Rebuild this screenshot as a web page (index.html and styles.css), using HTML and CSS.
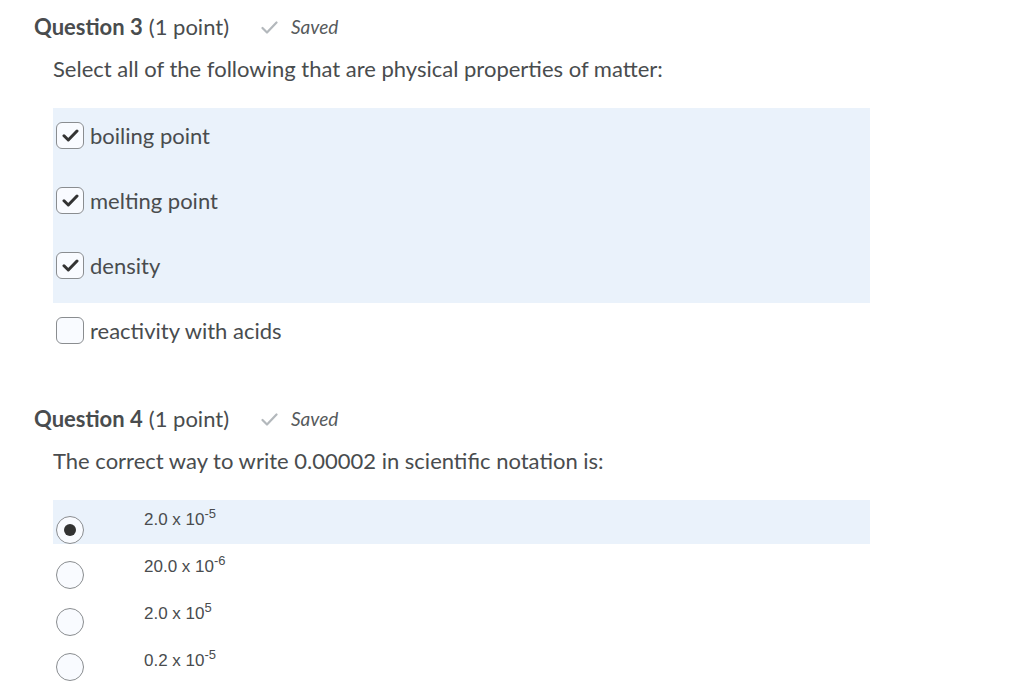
FILE: index.html
```html
<!DOCTYPE html>
<html lang="en">
<head>
  <meta charset="UTF-8">
  <title>Quiz</title>
  <link rel="stylesheet" href="styles.css">
</head>
<body>
  <div class="quiz">

    <!-- Question 3 -->
    <section class="question">
      <h2 class="q-head">
        <strong>Question 3</strong> (1 point)
        <span class="saved">
          <svg class="saved-icon" width="17" height="13" viewBox="0 0 17 13"><path d="M1.5 7 L6 11.5 L15.5 1.5" fill="none" stroke="#b3b8bc" stroke-width="2.2" stroke-linecap="round" stroke-linejoin="round"/></svg>
          Saved
        </span>
      </h2>
      <p class="q-text">Select all of the following that are physical properties of matter:</p>
      <ul class="checks">
        <li class="check-row on">
          <span class="box"><svg width="17" height="13" viewBox="0 0 17 13"><path d="M2 6.8 L6.3 11 L15 2" fill="none" stroke="#333" stroke-width="3" stroke-linecap="round" stroke-linejoin="round"/></svg></span>
          boiling point
        </li>
        <li class="check-row on">
          <span class="box"><svg width="17" height="13" viewBox="0 0 17 13"><path d="M2 6.8 L6.3 11 L15 2" fill="none" stroke="#333" stroke-width="3" stroke-linecap="round" stroke-linejoin="round"/></svg></span>
          melting point
        </li>
        <li class="check-row on">
          <span class="box"><svg width="17" height="13" viewBox="0 0 17 13"><path d="M2 6.8 L6.3 11 L15 2" fill="none" stroke="#333" stroke-width="3" stroke-linecap="round" stroke-linejoin="round"/></svg></span>
          density
        </li>
        <li class="check-row">
          <span class="box"></span>
          reactivity with acids
        </li>
      </ul>
    </section>

    <!-- Question 4 -->
    <section class="question q4">
      <h2 class="q-head">
        <strong>Question 4</strong> (1 point)
        <span class="saved">
          <svg class="saved-icon" width="17" height="13" viewBox="0 0 17 13"><path d="M1.5 7 L6 11.5 L15.5 1.5" fill="none" stroke="#b3b8bc" stroke-width="2.2" stroke-linecap="round" stroke-linejoin="round"/></svg>
          Saved
        </span>
      </h2>
      <p class="q-text">The correct way to write 0.00002 in scientific notation is:</p>
      <ul class="radios">
        <li class="radio-row on"><span class="circle"><span class="dot"></span></span><span class="val">2.0 x 10<sup>-5</sup></span></li>
        <li class="radio-row"><span class="circle"></span><span class="val">20.0 x 10<sup>-6</sup></span></li>
        <li class="radio-row"><span class="circle"></span><span class="val">2.0 x 10<sup>5</sup></span></li>
        <li class="radio-row last"><span class="circle"></span><span class="val">0.2 x 10<sup>-5</sup></span></li>
      </ul>
    </section>

  </div>
</body>
</html>
```

FILE: styles.css
```css
* { box-sizing: border-box; }
body { margin: 0; font-family: 'Lato', 'Liberation Sans', sans-serif; color: #494c4e; background: #fff; }

.quiz { padding: 15px 0 0 34px; }
.question.q4 { margin-top: 39px; }

/* heading line */
.q-head {
  margin: 0;
  font-size: 22px;
  font-weight: normal;
  line-height: 24px;
  display: flex;
  align-items: center;
}
.q-head strong { font-weight: bold; margin-right: 6px; }
.saved {
  display: flex;
  align-items: center;
  margin-left: 32px;
  font-style: italic;
  font-size: 19px;
  color: #565a5c;
}
.saved-icon { margin-right: 13px; margin-top: 1px; }

.q-text { margin: 18px 0 0 19px; font-size: 22px; line-height: 24px; }

/* checkboxes */
.checks { list-style: none; margin: 27px 0 0 19px; padding: 0; width: 817px; }
.check-row {
  display: flex;
  align-items: center;
  height: 65px;
  padding: 14px 0 25px 3px;
  font-size: 22px;
}
.check-row.on { background: #eaf2fb; }
.box {
  width: 28px;
  height: 27px;
  border: 1px solid #8a8d90;
  border-radius: 6px;
  background: #f9fbff;
  margin-right: 6px;
  display: flex;
  align-items: center;
  justify-content: center;
}

/* radios */
.radios { list-style: none; margin: 27px 0 0 19px; padding: 0; width: 817px; }
.radio-row {
  display: flex;
  align-items: flex-start;
  height: 47px;
  padding: 14px 0 0 3px;
  font-family: 'Liberation Sans', Arial, sans-serif;
  font-size: 17px;
}
.radio-row.on { background: #eaf2fb; height: 44px; margin-bottom: 3px; padding-top: 16px; }
.radio-row.on .val { margin-top: -6px; }
.radio-row.last { padding-top: 12px; }
.radio-row.last .val { margin-top: -2px; }
.circle {
  width: 28px;
  height: 28px;
  border: 1px solid #8a8d90;
  border-radius: 50%;
  background: #f9fbff;
  display: flex;
  align-items: center;
  justify-content: center;
}
.dot { width: 12px; height: 12px; border-radius: 50%; background: #333; }
.val { margin-left: 60px; margin-top: -4px; line-height: 20px; }
.val sup { font-size: 13px; line-height: 0; }
```
